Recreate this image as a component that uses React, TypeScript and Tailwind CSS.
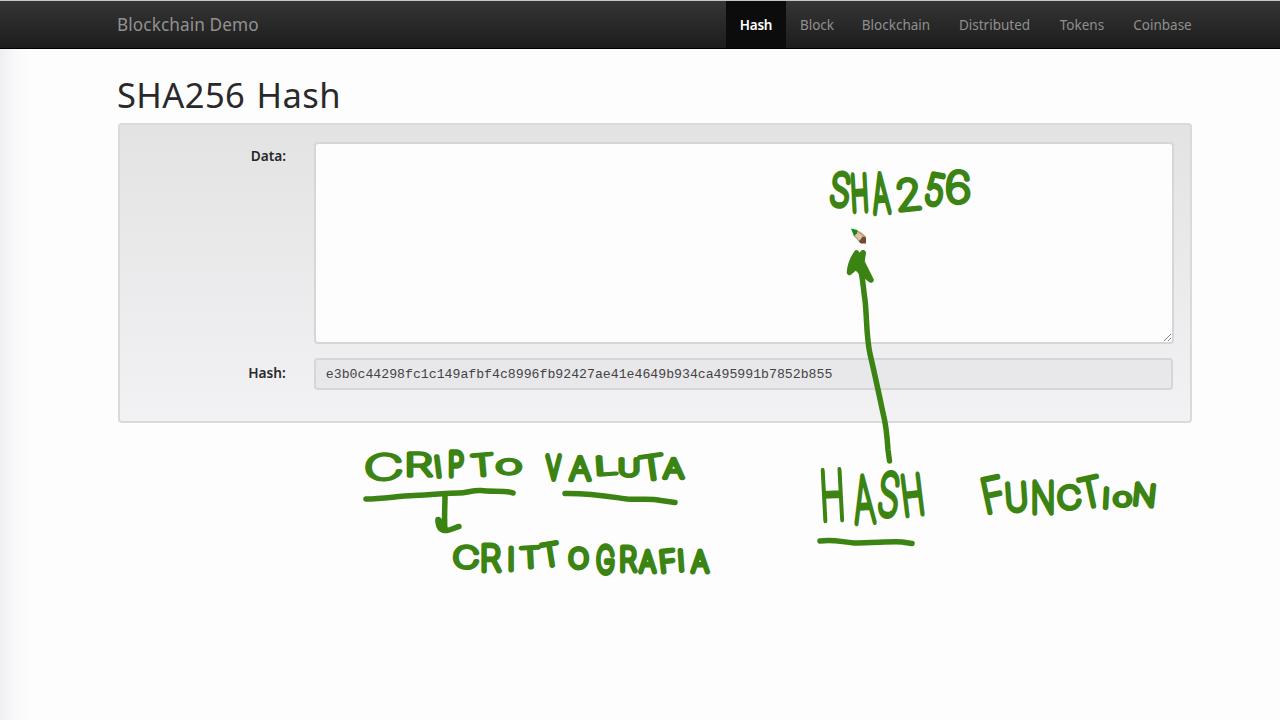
import clsx from 'clsx'

interface NavItem {
  label: string
  className: string
  active?: boolean
}

const navItems: NavItem[] = [
  { label: 'Hash', className: 'w-[60px]', active: true },
  { label: 'Block', className: 'w-[62px]' },
  { label: 'Blockchain', className: 'w-[96px]' },
  { label: 'Distributed', className: 'w-[101px]' },
  { label: 'Tokens', className: 'w-[74px]' },
  { label: 'Coinbase', className: 'w-[87px]' },
]

// letter, left, right, top, bottom, rotation
type Letter = [string, number, number, number, number, number?]

const PEN = 5.5

// Ink width of each letter in em
const inkWidth: Record<string, number> = {
  A: 0.64, C: 0.63, F: 0.47, G: 0.64, H: 0.58, L: 0.46, N: 0.6, O: 0.67,
  P: 0.5, R: 0.52, S: 0.54, T: 0.58, U: 0.57, V: 0.64, '2': 0.5, '5': 0.51, '6': 0.53,
}

const words: Letter[][] = [
  [
    ['S', 829, 852, 171, 208, 7],
    ['H', 850, 869, 173, 213, -3],
    ['A', 870, 892, 172, 215, -4],
    ['2', 895, 922, 177, 212, -6],
    ['5', 924, 946, 172, 207, 10],
    ['6', 943, 973, 169, 205],
  ],
  [
    ['C', 364, 403, 452, 482, -3],
    ['R', 404, 433, 451, 478],
    ['I', 435, 441, 454, 479, -7],
    ['P', 447, 465, 450, 478],
    ['T', 469, 496, 452, 478, -5],
    ['O', 495, 523, 457, 476],
  ],
  [
    ['V', 544, 563, 454, 481],
    ['A', 567, 593, 455, 482],
    ['L', 594, 618, 454, 477, -4],
    ['U', 618, 640, 457, 478],
    ['T', 637, 667, 453, 482, -8],
    ['A', 661, 686, 457, 480],
  ],
  [
    ['C', 452, 480, 544, 570],
    ['R', 479, 502, 542, 573],
    ['I', 508, 514, 546, 572],
    ['T', 518, 543, 545, 570, -3],
    ['T', 539, 562, 541, 568, -9],
    ['O', 567, 590, 546, 570],
    ['G', 595, 616, 544, 575],
    ['R', 618, 638, 544, 573],
    ['A', 637, 658, 549, 574],
    ['F', 658, 677, 548, 574, -6],
    ['I', 678, 684, 548, 573, -4],
    ['A', 689, 711, 549, 574],
  ],
  [
    ['H', 820, 845, 468, 522, -3],
    ['A', 851, 877, 474, 525, -4],
    ['S', 877, 901, 471, 518, 6],
    ['H', 901, 924, 473, 517, -7],
  ],
  [
    ['F', 981, 1005, 475, 514, -12],
    ['U', 1005, 1028, 481, 513, -4],
    ['N', 1031, 1055, 479, 515],
    ['C', 1056, 1082, 484, 511, -6],
    ['T', 1077, 1104, 475, 509, -12],
    ['I', 1103, 1109, 486, 510, 3],
    ['O', 1112, 1133, 490, 508],
    ['N', 1133, 1156, 482, 508, 6],
  ],
]

function PenWord({ letters }: { letters: Letter[] }) {
  return (
    <g fill="#3b8312">
      {letters.map(([char, left, right, top, bottom, angle = 0], i) => {
        const size = (bottom - top - PEN + 0.6) / 0.727
        const stretch = char === 'I' ? 1 : (right - left - PEN + 0.6) / (inkWidth[char] * size)
        // The stroke is squeezed together with the letter, so widen it by most of that factor
        const stroke = (PEN - 0.022 * size) / Math.pow(stretch, 0.65)
        return (
          <text
            key={i}
            y={size * 0.3635}
            fontSize={size}
            strokeWidth={stroke}
            textAnchor="middle"
            transform={`translate(${(left + right) / 2} ${(top + bottom) / 2}) rotate(${angle}) scale(${stretch} 1)`}
          >
            {char}
          </text>
        )
      })}
    </g>
  )
}

function Pencil() {
  return (
    <g stroke="none">
      <path d="m853.500 235.500 4.500-5 4 2 4 4v6.500h-5Z" fill="#dcc39e" />
      <path d="m854 235.500 7 7.500M857 231l8.500 6" stroke="#8b7157" strokeWidth="0.8" />
      <path d="m858.500 241.500 2.500-2.500 1.500-2.500 3.500 1v6h-5Z" fill="#70483a" />
      <path d="m851 228.500 6.500 1.500-.5 3.500-3 2.500Z" fill="#168a18" />
    </g>
  )
}

function Annotations() {
  return (
    <svg
      className="pointer-events-none absolute inset-0 font-['Inter'] font-thin"
      width="1280"
      height="720"
      viewBox="0 0 1280 720"
      fill="none"
      stroke="#3b8312"
      strokeWidth={PEN}
      strokeLinecap="round"
      strokeLinejoin="round"
    >
      {words.map((letters, i) => (
        <PenWord key={i} letters={letters} />
      ))}
      {/* Underlines */}
      <path d="M366 499C384 499 397 496 414 495.500C432 495 447 493 459 493C467 493 472 490 481 490.500C491 492 507 490 513 493" />
      <path d="M565 493.500C590 493 612 497 627 499C640 500 650 498 661 500.500L675 502.500" />
      <path d="M820 541C834 539 841 542 854 543C873 543 894 541 902 542L912 543.500" />
      {/* Short arrow down */}
      <path d="M445 495C445 508 444 518 445 530M438 519.500C438 528 441 531 447 530.500C452 530 456 527 459 526.500" />
      <path d="m439 521 5 8" strokeWidth="7" />
      {/* Long arrow up */}
      <path d="M889.500 461L888 450C887 434 886 424 883 413C879 394 875 375 870 354C866 335 867 317 865 300C863 287 863 278 860 267L863 253" />
      <path d="M849.500 272.500C850 264 853 258 856.500 253L857 258L863 253L862 262L866 270L871 280L862 273L856 267Z" fill="#3b8312" />
      <Pencil />
    </svg>
  )
}

function Navbar() {
  return (
    <nav className="flex h-[49px] justify-between border-t border-b border-t-[#c4c9c5] border-b-black bg-linear-to-b from-[#353535] to-[#1d1d1d] pr-[74px] pl-[117px]">
      <a className="mt-[11.500px] text-[17.200px] leading-6 tracking-[0.1px] text-[#929292]">Blockchain Demo</a>
      <ul className="flex text-[13.500px] leading-[48px]">
        {navItems.map((item) => (
          <li
            key={item.label}
            className={clsx(
              'h-[47px] text-center whitespace-nowrap',
              item.className,
              item.active ? 'bg-[#0c0c0c] font-semibold tracking-[-0.2px] text-white' : 'text-[#8f8f8f]',
            )}
          >
            {item.label}
          </li>
        ))}
      </ul>
    </nav>
  )
}

export default function App() {
  return (
    <div className="relative h-[720px] w-[1280px] overflow-hidden bg-[#fdfdfd] font-['Noto_Sans',sans-serif] text-[#29292c]">
      <Navbar />
      <div className="flex h-[671px]">
        <div className="w-[30px] bg-linear-to-r from-[#efeff1] via-[#f9f9fb] to-[#fdfdfd]" />
        <main className="ml-[88px] w-[1074px] pt-[26px]">
          <h1 className="-ml-px text-[34.500px] leading-[40px] tracking-[0.400px] [word-spacing:2px]">SHA256 Hash</h1>
          <form className="mt-2 h-[300px] rounded-[4px] border-2 border-[#dadadb] bg-linear-to-b from-[#e3e3e4] to-[#f2f2f4] pt-[17px] pr-[17px]">
            <div className="flex">
              <label className="w-[166px] pt-[4px] text-right text-[13.700px] leading-5 font-semibold">Data:</label>
              <textarea
                className="ml-[28px] block h-[202px] w-[860px] resize-none rounded-[4px] border-2 border-[#d6d6d7] bg-[#fdfdfd]"
                readOnly
              />
              <svg className="-ml-[11px] mt-[191px] size-[9px] shrink-0" viewBox="0 0 9 9" stroke="#888" fill="none">
                <path d="M1 8 8 1M5 8l3-3" />
              </svg>
            </div>
            <div className="mt-[14px] flex">
              <label className="w-[166px] pt-[4.500px] text-right text-[13.700px] leading-5 font-semibold">Hash:</label>
              <div className="ml-[28px] h-[32px] w-[860px] rounded-[4px] border-2 border-[#d6d6d7] bg-[#e8e8ea] pl-[10px] font-['Liberation_Mono',monospace] text-[13.200px] leading-[30px] text-[#434345]">
                e3b0c44298fc1c149afbf4c8996fb92427ae41e4649b934ca495991b7852b855
              </div>
            </div>
          </form>
        </main>
      </div>
      <Annotations />
    </div>
  )
}
